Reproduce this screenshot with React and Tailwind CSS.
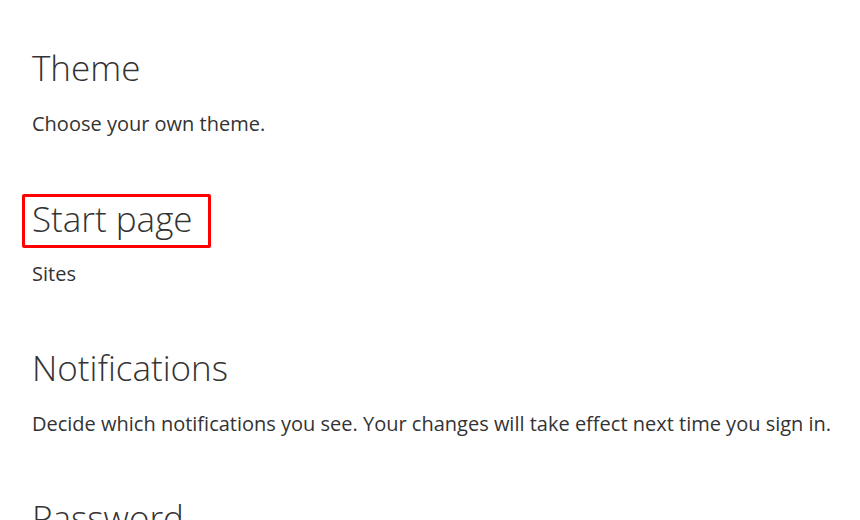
import React from "react";

const sections = [
  { title: "Theme", text: "Choose your own theme." },
  { title: "Start page", text: "Sites", highlight: true },
  {
    title: "Notifications",
    text: "Decide which notifications you see. Your changes will take effect next time you sign in.",
  },
  { title: "Password", text: "Change your password." },
];

function Section({ title, text, highlight }) {
  return (
    <div className="flex flex-col items-start">
      <h2
        className={
          highlight
            ? "-mb-[8px] -ml-[10px] -mt-[2px] rounded-[2px] border-[3px] border-[#ff0000] pb-[4px] pl-[7px] pr-[15px] text-[35px] font-light leading-[44px] text-[#333333]"
            : "text-[35px] font-light leading-[44px] text-[#333333]"
        }
      >
        {title}
      </h2>
      <p className="mt-[20px] whitespace-nowrap text-[20px] leading-[28px] text-[#333333]">{text}</p>
    </div>
  );
}

export default function App() {
  return (
    <div
      className="h-[520px] w-[860px] overflow-hidden bg-white pl-[32px] pt-[46px]"
      style={{ fontFamily: '"Open Sans", "Noto Sans", sans-serif' }}
    >
      <div className="flex flex-col gap-[58px]">
        {sections.map((s) => (
          <Section key={s.title} {...s} />
        ))}
      </div>
    </div>
  );
}
